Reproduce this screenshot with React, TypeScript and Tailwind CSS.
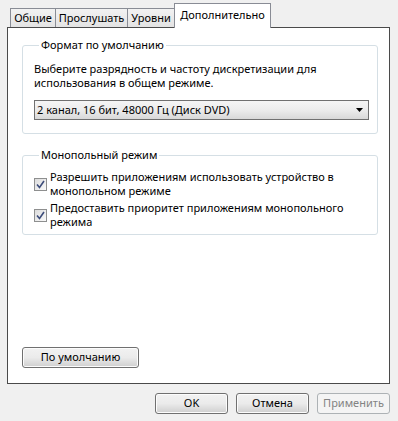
import { ReactNode } from 'react';

const tabs = [
    { label: 'Общие', width: 'w-[46px]' },
    { label: 'Прослушать', width: 'w-[73px]' },
    { label: 'Уровни', width: 'w-[48px]' },
];

const CheckIcon = () => (
    <div className="flex h-[13px] w-[13px] flex-shrink-0 items-center justify-center border border-[#8e8f8f] bg-gradient-to-br from-[#dcdcdc] to-[#fafafa]">
        <svg width="9" height="9" viewBox="0 0 9 9">
            <path d="M1 4.5 L3.5 7.5 L8 1" fill="none" stroke="#3c4c7a" strokeWidth="1.6" />
        </svg>
    </div>
);

const CheckRow = ({ children }: { children: ReactNode }) => (
    <div className="flex items-center gap-[3px]">
        <CheckIcon />
        <p className="leading-[14px] whitespace-nowrap">{children}</p>
    </div>
);

const WinButton = ({ label, disabled, className }: { label: string; disabled?: boolean; className?: string }) => (
    <button
        className={
            disabled
                ? `flex h-[21px] items-center justify-center rounded-[3px] border border-[#adb2b5] bg-[#f4f4f4] text-[#838383] ${className}`
                : `flex h-[21px] items-center justify-center rounded-[3px] border border-[#707070] bg-gradient-to-b from-[#f2f2f2] via-[#ebebeb] to-[#cfcfcf] text-black shadow-[inset_0_0_0_1px_#fcfcfc] ${className}`
        }
    >
        {label}
    </button>
);

export default function App() {
    return (
        <div
            className="flex h-[421px] w-[398px] flex-col bg-[#f0f0f0] pt-[3px] pr-[8px] pl-[7px] text-[11px] text-black"
            style={{ fontFamily: '"Noto Sans", "Open Sans", sans-serif' }}
        >
            <div className="flex h-[24px] items-end pl-[3px]">
                {tabs.map((tab) => (
                    <div
                        key={tab.label}
                        className={`-mr-px flex h-[19px] items-center justify-center border border-b-0 border-[#898c95] bg-gradient-to-b from-[#f2f2f2] to-[#e3e3e3] ${tab.width}`}
                    >
                        {tab.label}
                    </div>
                ))}
                <div className="relative z-10 -mb-px flex h-[25px] w-[97px] items-center justify-center border border-b-0 border-[#898c95] bg-white pb-[2px]">
                    Дополнительно
                </div>
            </div>

            <div className="flex h-[357px] flex-col border border-[#4a4a4a] bg-white">
                <fieldset className="mt-[9px] mr-[11px] ml-[14px] rounded-[3px] border border-[#d5dfe5] pr-[8px] pb-[13px] pl-[11px]">
                    <legend className="ml-[5px] px-[2px] leading-[16px]">Формат по умолчанию</legend>
                    <p className="pt-[9px] leading-[14px] whitespace-nowrap">
                        Выберите разрядность и частоту дискретизации для
                        <br />
                        использования в общем режиме.
                    </p>
                    <div className="mt-[10px] flex h-[20px] items-center justify-between border border-[#707070] bg-gradient-to-b from-[#f5f5f5] via-[#ececec] to-[#d8d8d8] pr-[5px] pl-[2px]">
                        <span>2 канал, 16 бит, 48000 Гц (Диск DVD)</span>
                        <svg width="7" height="4" viewBox="0 0 7 4">
                            <path d="M0 0 H7 L3.5 4 Z" fill="#000" />
                        </svg>
                    </div>
                </fieldset>

                <fieldset className="mt-[13px] mr-[11px] ml-[14px] rounded-[3px] border border-[#d5dfe5] pr-[8px] pb-[5px] pl-[11px]">
                    <legend className="ml-[5px] px-[2px] leading-[16px]">Монопольный режим</legend>
                    <div className="flex flex-col gap-[3px] pt-[7px]">
                        <CheckRow>
                            Разрешить приложениям использовать устройство в
                            <br />
                            монопольном режиме
                        </CheckRow>
                        <CheckRow>
                            Предоставить приоритет приложениям монопольного
                            <br />
                            режима
                        </CheckRow>
                    </div>
                </fieldset>

                <div className="flex-1" />
                <div className="mb-[15px] ml-[14px]">
                    <WinButton label="По умолчанию" className="w-[117px]" />
                </div>
            </div>

            <div className="mt-[9px] flex justify-end gap-[8px]">
                <WinButton label="OK" className="w-[73px]" />
                <WinButton label="Отмена" className="w-[73px]" />
                <WinButton label="Применить" disabled className="w-[73px]" />
            </div>
        </div>
    );
}
